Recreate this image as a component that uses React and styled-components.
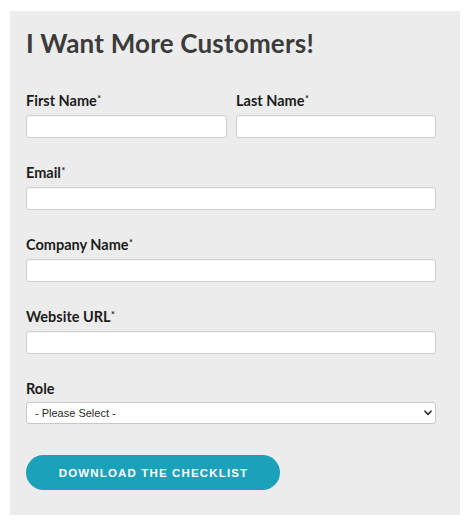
import React from "react";
import styled, { createGlobalStyle } from "styled-components";

const Global = createGlobalStyle`
  html, body { margin: 0; padding: 0; background: #ffffff; }
  body { font-family: "Lato", "Open Sans", sans-serif; }
  * { box-sizing: border-box; }
`;

const Page = styled.div`
  padding: 11px 14px 11px 10px;
`;

const Panel = styled.form`
  width: 450px;
  height: 504px;
  background: #ececec;
  padding: 17px 24px 25px 16px;
  display: flex;
  flex-direction: column;
`;

const Heading = styled.h1`
  margin: 0 0 34px 0;
  font-family: "Lato", sans-serif;
  font-weight: 700;
  font-size: 26px;
  line-height: 30px;
  color: #3b3b3b;
  letter-spacing: 0.2px;
`;

const Row = styled.div`
  display: grid;
  grid-template-columns: ${(p) => (p.$split ? "201px 200px" : "1fr")};
  column-gap: 9px;
  margin-bottom: ${(p) => (p.$last ? "31px" : "26px")};
`;

const Field = styled.div`
  display: flex;
  flex-direction: column;
`;

const Label = styled.label`
  font-family: "Lato", sans-serif;
  font-weight: 700;
  font-size: 14.5px;
  line-height: 18px;
  color: #1c1c1c;
  margin-bottom: ${(p) => (p.$tight ? "4px" : "5px")};
  height: 18px;
`;

const Star = styled.sup`
  font-size: 9px;
  font-weight: 700;
  line-height: 0;
  vertical-align: 4px;
  margin-left: 0.5px;
`;

const Input = styled.input`
  display: block;
  width: 100%;
  height: 23px;
  border: 1px solid #cfcfcf;
  border-radius: 3px;
  background: #ffffff;
  box-shadow: inset 0 1px 1px rgba(0, 0, 0, 0.04);
  padding: 0 8px;
  font-family: "Liberation Sans", Arial, sans-serif;
  font-size: 12px;
  outline: none;
`;

const SelectWrap = styled.div`
  position: relative;
  width: 100%;
`;

const Select = styled.select`
  display: block;
  width: 100%;
  height: 22px;
  appearance: none;
  -webkit-appearance: none;
  border: 1px solid #c9c9c9;
  border-radius: 3px;
  background: #ffffff;
  padding: 0 24px 0 8px;
  font-family: "Liberation Sans", Arial, sans-serif;
  font-size: 11px;
  color: #2b2b2b;
  outline: none;
`;

const Chevron = styled.svg`
  position: absolute;
  right: 4px;
  top: 8px;
  width: 8px;
  height: 6px;
  pointer-events: none;
`;

const Button = styled.button`
  width: 254px;
  height: 35px;
  border: none;
  border-radius: 18px;
  background: #1ba1b9;
  color: #ffffff;
  font-family: "Liberation Sans", Arial, sans-serif;
  font-weight: 700;
  font-size: 11.5px;
  letter-spacing: 1.15px;
  text-transform: uppercase;
  padding: 0 0 0 1px;
  cursor: pointer;
`;

function TextField({ label, required }) {
  return (
    <Field>
      <Label>
        {label}
        {required && <Star>*</Star>}
      </Label>
      <Input type="text" />
    </Field>
  );
}

export default function App() {
  return (
    <>
      <Global />
      <Page>
        <Panel onSubmit={(e) => e.preventDefault()}>
          <Heading>I Want More Customers!</Heading>
          <Row $split>
            <TextField label="First Name" required />
            <TextField label="Last Name" required />
          </Row>
          <Row>
            <TextField label="Email" required />
          </Row>
          <Row>
            <TextField label="Company Name" required />
          </Row>
          <Row>
            <TextField label="Website URL" required />
          </Row>
          <Row $last>
            <Field>
              <Label $tight>Role</Label>
              <SelectWrap>
                <Select defaultValue="">
                  <option value="">- Please Select -</option>
                </Select>
                <Chevron viewBox="0 0 8 6">
                  <path d="M1 1.2 L4 4.4 L7 1.2" fill="none" stroke="#2a2a2a" strokeWidth="1.6" strokeLinecap="round" strokeLinejoin="round" />
                </Chevron>
              </SelectWrap>
            </Field>
          </Row>
          <Button type="button">Download the Checklist</Button>
        </Panel>
      </Page>
    </>
  );
}
